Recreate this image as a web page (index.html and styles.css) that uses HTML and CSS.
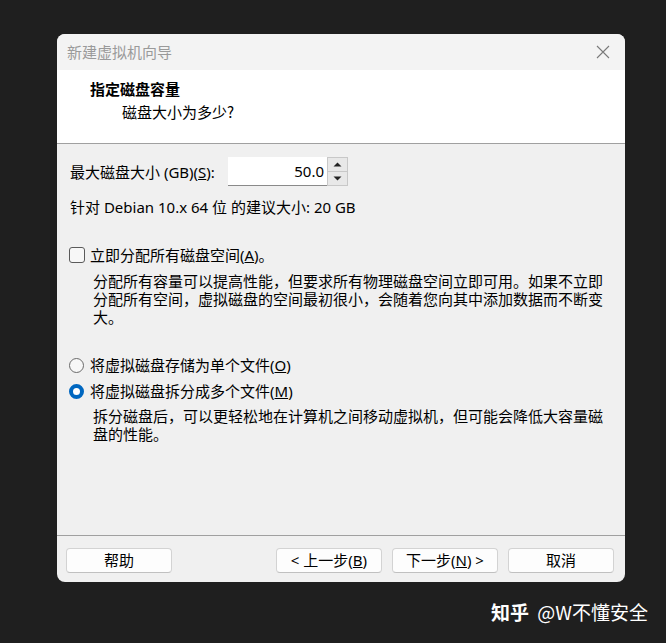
FILE: index.html
```html
<!DOCTYPE html>
<html lang="zh-CN">
<head>
<meta charset="utf-8">
<title>新建虚拟机向导</title>
<link rel="stylesheet" href="styles.css">
</head>
<body>
<div class="page">
  <div class="dialog">
    <div class="titlebar">
      <span class="title">新建虚拟机向导</span>
      <svg class="close" width="14" height="14" viewBox="0 0 14 14"><path d="M1 1 L13 13 M13 1 L1 13" stroke="#7a7a7a" stroke-width="1.1" fill="none"/></svg>
    </div>
    <div class="header">
      <div class="h-title">指定磁盘容量</div>
      <div class="h-sub">磁盘大小为多少?</div>
    </div>
    <div class="body">
      <div class="size-row">
        <span class="lbl">最大磁盘大小 (GB)(<u>S</u>):</span>
        <div class="spin">
          <div class="spin-val">50.0</div>
          <div class="spin-btns">
            <div class="spin-btn"><svg width="9" height="5" viewBox="0 0 9 5"><path d="M0.5 4.5 L4.5 0.5 L8.5 4.5 Z" fill="#222"/></svg></div>
            <div class="spin-btn"><svg width="9" height="5" viewBox="0 0 9 5"><path d="M0.5 0.5 L4.5 4.5 L8.5 0.5 Z" fill="#222"/></svg></div>
          </div>
        </div>
      </div>
      <div class="hint">针对 Debian 10.x 64 位 的建议大小: 20 GB</div>
      <div class="opt check-row">
        <span class="checkbox"></span>
        <span>立即分配所有磁盘空间(<u>A</u>)。</span>
      </div>
      <div class="desc">分配所有容量可以提高性能，但要求所有物理磁盘空间立即可用。如果不立即<br>分配所有空间，虚拟磁盘的空间最初很小，会随着您向其中添加数据而不断变<br>大。</div>
      <div class="opt radio-row first">
        <span class="radio"></span>
        <span>将虚拟磁盘存储为单个文件(<u>O</u>)</span>
      </div>
      <div class="opt radio-row second">
        <span class="radio on"></span>
        <span>将虚拟磁盘拆分成多个文件(<u>M</u>)</span>
      </div>
      <div class="desc desc2">拆分磁盘后，可以更轻松地在计算机之间移动虚拟机，但可能会降低大容量磁<br>盘的性能。</div>
    </div>
    <div class="footer">
      <button class="btn">帮助</button>
      <div class="spacer"></div>
      <button class="btn">&lt; 上一步(<u>B</u>)</button>
      <button class="btn">下一步(<u>N</u>) &gt;</button>
      <button class="btn cancel">取消</button>
    </div>
  </div>
  <div class="watermark"><b>知乎</b> @W不懂安全</div>
</div>
</body>
</html>
```
FILE: styles.css
```css
* { box-sizing: border-box; }
html, body { margin: 0; padding: 0; }
body {
  background: #1f1f1f;
  font-family: "Segoe UI", "Noto Sans", "Noto Sans CJK SC", sans-serif;
  font-size: 15px;
  color: #000;
}
.page {
  width: 666px;
  height: 643px;
  padding-top: 34px;
  padding-left: 57px;
}
.dialog {
  width: 568px;
  height: 548px;
  border-radius: 8px;
  overflow: hidden;
  background: #f0f0f0;
  display: flex;
  flex-direction: column;
}
.titlebar {
  height: 36px;
  background: #f3f3f3;
  display: flex;
  align-items: center;
  padding-left: 10px;
  padding-right: 15px;
}
.title {
  color: #9a9a9a;
  font-family: "Noto Sans CJK SC", sans-serif;
  flex: 1;
  line-height: 20px;
  padding-top: 0;
}
.close { display: block; margin-top: 0; }
.header {
  height: 74px;
  background: #fff;
  border-bottom: 1px solid #a0a0a0;
  padding-top: 9px;
}
.h-title {
  font-family: "Noto Sans CJK SC", sans-serif;
  font-weight: 700;
  margin-left: 33px;
  line-height: 20px;
}
.h-sub {
  font-family: "Noto Sans CJK SC", sans-serif;
  margin-left: 65px;
  margin-top: 3px;
  line-height: 20px;
}
.body {
  height: 391px;
  padding-left: 12px;
  padding-top: 13px;
}
.size-row {
  display: flex;
  align-items: center;
  height: 29px;
}
.lbl {
  line-height: 18px;
  margin-left: 1px;
  width: 158px;
}
.spin {
  display: flex;
  height: 29px;
}
.spin-val {
  width: 99px;
  background: #fff;
  border-bottom: 1px solid #8a8a8a;
  text-align: right;
  padding-right: 3px;
  line-height: 28px;
  font-size: 15px;
}
.spin-btns {
  width: 21px;
  display: flex;
  flex-direction: column;
  border: 1px solid #c8c8c8;
  background: #e8e8e8;
}
.spin-btn {
  flex: 1;
  display: flex;
  align-items: center;
  justify-content: center;
}
.spin-btn + .spin-btn { border-top: 1px solid #c8c8c8; }
.spin-btn svg { display: block; }
.hint {
  margin-top: 12px;
  margin-left: 1px;
  line-height: 18px;
}
.opt {
  display: flex;
  align-items: center;
  line-height: 18px;
  height: 18px;
}
.check-row { margin-top: 30px; }
.checkbox {
  width: 16px;
  height: 16px;
  border: 1px solid #5a5a5a;
  border-radius: 3px;
  background: #f7f7f7;
  margin-right: 5px;
}
.desc {
  margin-top: 8px;
  margin-left: 24px;
  line-height: 18px;
  font-family: "Noto Sans CJK SC", sans-serif;
}
.radio-row.first { margin-top: 30px; }
.radio-row.second { margin-top: 8px; }
.radio {
  width: 15px;
  height: 15px;
  border-radius: 50%;
  border: 1px solid #6a6a6a;
  background: #f7f7f7;
  margin-left: 0px;
  margin-right: 6px;
}
.radio.on {
  border: 4.5px solid #0067c0;
  background: #fff;
}
.desc2 { margin-top: 7px; }
.footer {
  flex: 1;
  border-top: 1px solid #a0a0a0;
  display: flex;
  align-items: flex-start;
  padding-top: 12px;
  padding-left: 9px;
  padding-right: 11px;
}
.spacer { flex: 1; }
.btn {
  width: 106px;
  height: 25px;
  background: #fdfdfd;
  border: 1px solid #d3d3d3;
  border-bottom-color: #c0c0c0;
  border-radius: 4px;
  font-family: "Segoe UI", "Noto Sans", "Noto Sans CJK SC", sans-serif;
  font-size: 15px;
  line-height: 21px;
  color: #000;
  padding: 0;
  margin-left: 10px;
}
.footer .btn:first-child { margin-left: 0; }
.btn u { text-decoration: underline; }
.watermark {
  text-align: right;
  padding-right: 18px;
  margin-top: 18px;
  color: #fff;
  font-family: "Noto Sans CJK SC", sans-serif;
  font-size: 19px;
  line-height: 24px;
}
.watermark b { font-weight: 700; margin-right: 4px; }
```
